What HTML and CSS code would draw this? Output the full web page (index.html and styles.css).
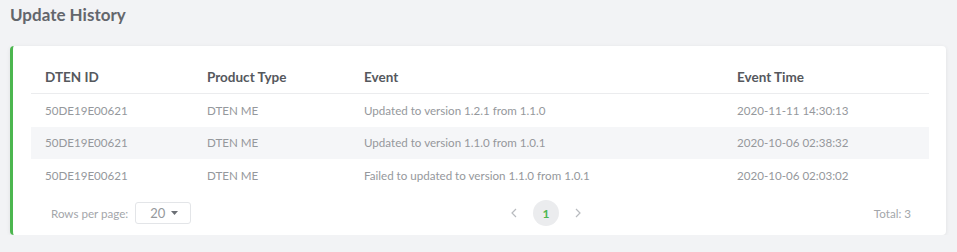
FILE: index.html
```html
<!DOCTYPE html>
<html lang="en">
<head>
<meta charset="utf-8">
<title>Update History</title>
<link rel="stylesheet" href="styles.css">
</head>
<body>
<div class="page">
  <h1 class="title">Update History</h1>
  <section class="card">
    <div class="table">
      <div class="row head">
        <div class="cell">DTEN ID</div>
        <div class="cell">Product Type</div>
        <div class="cell">Event</div>
        <div class="cell">Event Time</div>
      </div>
      <div class="row">
        <div class="cell">50DE19E00621</div>
        <div class="cell">DTEN ME</div>
        <div class="cell">Updated to version 1.2.1 from 1.1.0</div>
        <div class="cell">2020-11-11 14:30:13</div>
      </div>
      <div class="row striped">
        <div class="cell">50DE19E00621</div>
        <div class="cell">DTEN ME</div>
        <div class="cell">Updated to version 1.1.0 from 1.0.1</div>
        <div class="cell">2020-10-06 02:38:32</div>
      </div>
      <div class="row">
        <div class="cell">50DE19E00621</div>
        <div class="cell">DTEN ME</div>
        <div class="cell">Failed to updated to version 1.1.0 from 1.0.1</div>
        <div class="cell">2020-10-06 02:03:02</div>
      </div>
    </div>
    <div class="pager">
      <div class="rows-per-page">
        <span class="label">Rows per page:</span>
        <div class="select">
          <span>20</span>
          <svg class="caret" width="7" height="4" viewBox="0 0 7 4"><path d="M0 0h7L3.5 4z" fill="#6b6f75"/></svg>
        </div>
      </div>
      <div class="pages">
        <svg class="arrow" width="6" height="10" viewBox="0 0 6 10"><path d="M5 1L1 5l4 4" fill="none" stroke="#b8bbbf" stroke-width="1.2"/></svg>
        <span class="page-num">1</span>
        <svg class="arrow" width="6" height="10" viewBox="0 0 6 10"><path d="M1 1l4 4-4 4" fill="none" stroke="#b8bbbf" stroke-width="1.2"/></svg>
      </div>
      <div class="total">Total: 3</div>
    </div>
  </section>
</div>
</body>
</html>
```
FILE: styles.css
```css
html, body {
  margin: 0;
  padding: 0;
  background: #f2f3f5;
  font-family: Lato, "Open Sans", sans-serif;
}
.page {
  padding: 0 11px 0 10px;
}
.title {
  margin: 0;
  padding-top: 4px;
  height: 42px;
  font-size: 17px;
  font-weight: 700;
  color: #63666c;
  line-height: 22px;
}
.card {
  background: #fff;
  border-left: 3px solid #4cb64f;
  border-radius: 4px;
  box-shadow: 0 1px 4px rgba(0, 0, 0, 0.08);
  padding: 14px 17px 0 18px;
  height: 175px;
}
.table {
  display: flex;
  flex-direction: column;
}
.row {
  display: grid;
  grid-template-columns: 162px 157px 373px 1fr;
  height: 32.5px;
  align-items: center;
  font-size: 11.6px;
  color: #95989c;
}
.row.head {
  height: 33px;
  border-bottom: 1px solid #ebecee;
  font-size: 13.5px;
  font-weight: 700;
  color: #55585d;
}
.row.striped {
  background: #f5f6f8;
}
.cell {
  padding-left: 14px;
  white-space: nowrap;
}
.pager {
  display: grid;
  grid-template-columns: 480px auto 1fr;
  align-items: center;
  height: 43px;
  font-size: 11.6px;
  color: #a3a6aa;
}
.rows-per-page {
  display: flex;
  align-items: center;
  gap: 7px;
  padding-left: 20px;
}
.select {
  box-sizing: border-box;
  width: 56px;
  height: 22px;
  border: 1px solid #e3e5e8;
  border-radius: 3px;
  display: flex;
  align-items: center;
  padding-left: 14px;
  gap: 6px;
  color: #95989c;
  font-size: 13px;
}
.pages {
  display: flex;
  align-items: center;
  gap: 16px;
}
.page-num {
  width: 26px;
  height: 26px;
  border-radius: 50%;
  background: #ebecee;
  color: #4cb64f;
  font-weight: 700;
  font-size: 12px;
  display: flex;
  align-items: center;
  justify-content: center;
}
.total {
  justify-self: end;
  padding-right: 18px;
}
```
